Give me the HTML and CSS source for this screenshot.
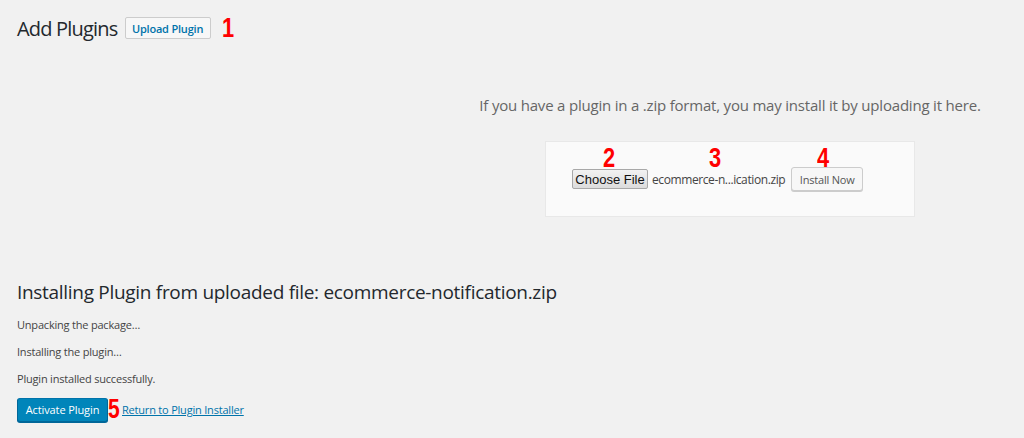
FILE: index.html
```html
<!DOCTYPE html>
<html>
<head>
<meta charset="utf-8">
<link rel="stylesheet" href="styles.css">
</head>
<body>
<div class="wrap">
  <div class="title-row">
    <h1 class="title">Add Plugins</h1>
    <button class="btn-secondary">Upload Plugin</button>
    <span class="mark mark-1">1</span>
  </div>

  <div class="upload">
    <p class="install-help">If you have a plugin in a .zip format, you may install it by uploading it here.</p>
    <form class="upload-form">
      <span class="mark mark-2">2</span>
      <span class="mark mark-3">3</span>
      <span class="mark mark-4">4</span>
      <div class="file-row">
        <span class="file-btn">Choose File</span>
        <span class="file-name">ecommerce-n...ication.zip</span>
        <span class="btn-install">Install Now</span>
      </div>
    </form>
  </div>

  <h2 class="sub-title">Installing Plugin from uploaded file: ecommerce-notification.zip</h2>
  <p class="log">Unpacking the package…</p>
  <p class="log">Installing the plugin…</p>
  <p class="log">Plugin installed successfully.</p>
  <div class="actions">
    <a class="btn-primary">Activate Plugin</a><span class="mark mark-5">5</span><a class="link">Return to Plugin Installer</a>
  </div>
</div>
</body>
</html>
```
FILE: styles.css
```css
html, body {
  margin: 0;
  padding: 0;
  background: #f1f1f1;
}
body {
  font-family: "Open Sans", "Noto Sans", sans-serif;
  color: #444;
  font-size: 13px;
  width: 1024px;
  height: 438px;
  overflow: hidden;
}
.wrap {
  padding: 15px 0 0 17px;
}
.title-row {
  display: flex;
  align-items: center;
  height: 26px;
}
.title {
  margin: 0;
  font-size: 20px;
  font-weight: 400;
  color: #23282d;
  letter-spacing: -0.8px;
}
.btn-secondary {
  margin-left: 7px;
  height: 22px;
  width: 86px;
  padding: 0;
  font-family: inherit;
  font-size: 11px;
  font-weight: 600;
  color: #0073aa;
  background: #f7f7f7;
  border: 1px solid #ccc;
  border-radius: 2px;
  letter-spacing: -0.2px;
}
.mark {
  display: inline-block;
  font-family: "Liberation Sans", Arial, sans-serif;
  font-weight: 700;
  color: #f00;
  font-size: 28px;
  line-height: 1;
  transform: scaleX(0.78);
  transform-origin: left center;
}
.mark-1 {
  margin-left: 11px;
}
.upload {
  padding-left: 419px;
  display: flex;
  flex-direction: column;
  align-items: center;
}
.install-help {
  margin: 54px 0 0 0;
  font-size: 15px;
  color: #666;
  letter-spacing: -0.2px;
}
.upload-form {
  position: relative;
  margin-top: 26px;
  width: 368px;
  height: 74px;
  background: #fafafa;
  border: 1px solid #e8e8e8;
  box-sizing: content-box;
}
.mark-2, .mark-3, .mark-4 {
  position: absolute;
  top: 2px;
}
.mark-2 { left: 57px; }
.mark-3 { left: 163px; }
.mark-4 { left: 271px; }
.file-row {
  display: flex;
  align-items: center;
  padding: 25px 0 0 26px;
}
.file-btn {
  box-sizing: border-box;
  width: 76px;
  height: 20px;
  display: flex;
  align-items: center;
  justify-content: center;
  font-family: "Liberation Sans", Arial, sans-serif;
  font-size: 13px;
  color: #111;
  background: linear-gradient(#f2f2f2, #dcdcdc);
  border: 1px solid #a8a8a8;
  border-radius: 2px;
}
.file-name {
  margin-left: 4px;
  font-size: 12px;
  color: #444;
  letter-spacing: -0.4px;
}
.btn-install {
  margin-left: 6px;
  box-sizing: border-box;
  width: 72px;
  height: 24px;
  display: flex;
  align-items: center;
  justify-content: center;
  font-size: 11px;
  color: #555;
  background: #f7f7f7;
  border: 1px solid #ccc;
  border-radius: 3px;
  box-shadow: 0 1px 0 #ccc;
  letter-spacing: -0.2px;
}
.sub-title {
  margin: 62px 0 0 0;
  font-size: 19px;
  font-weight: 400;
  color: #23282d;
  letter-spacing: -0.3px;
  line-height: 26px;
}
.log {
  margin: 0;
  font-size: 11px;
  line-height: 27px;
  letter-spacing: -0.2px;
}
.sub-title + .log {
  margin-top: 6px;
}
.actions {
  display: flex;
  align-items: center;
  margin-top: 4px;
}
.btn-primary {
  box-sizing: border-box;
  width: 91px;
  height: 24px;
  display: flex;
  align-items: center;
  justify-content: center;
  font-size: 11px;
  color: #fff;
  background: #0085ba;
  border: 1px solid #0073aa;
  border-color: #0073aa #006799 #006799;
  border-radius: 3px;
  box-shadow: 0 1px 0 #006799;
  letter-spacing: -0.1px;
}
.mark-5 {
  width: 11px;
  font-size: 27px;
}
.link {
  margin-left: 3px;
  font-size: 11px;
  color: #0073aa;
  text-decoration: underline;
  letter-spacing: -0.2px;
}
```
